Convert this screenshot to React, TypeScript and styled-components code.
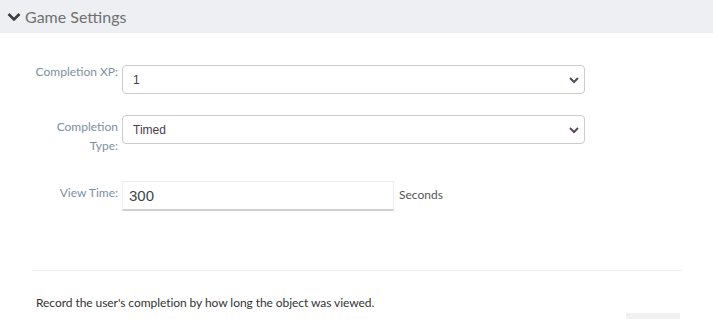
import React from "react";
import styled, { createGlobalStyle } from "styled-components";

const GlobalStyle = createGlobalStyle`
  html, body {
    margin: 0;
    padding: 0;
    background: #ffffff;
    font-family: "Lato", "Liberation Sans", sans-serif;
  }
`;

const Page = styled.div`
  width: 713px;
  height: 319px;
  overflow: hidden;
`;

const Header = styled.div`
  display: flex;
  align-items: center;
  gap: 4px;
  height: 33px;
  padding-left: 7px;
  background: #eeeff3;
  color: #6f6f6f;
  font-size: 16px;
`;

const Form = styled.div`
  display: flex;
  flex-direction: column;
  padding-top: 32px;
`;

const Row = styled.div<{ gap: number }>`
  display: flex;
  align-items: flex-start;
  margin-bottom: ${(p) => p.gap}px;
`;

const Label = styled.label<{ offset?: number }>`
  width: 122px;
  flex-shrink: 0;
  text-align: right;
  padding-right: 4px;
  margin-top: ${(p) => p.offset ?? 2}px;
  box-sizing: border-box;
  color: #7d8fa3;
  font-size: 12px;
  line-height: 19px;
`;

const SelectBox = styled.div`
  position: relative;
  width: 463px;
  height: 29px;
  box-sizing: border-box;
  border: 1px solid #cccccc;
  border-radius: 4px;
  display: flex;
  align-items: center;
  padding-left: 10px;
  color: #4a3b4e;
  font-size: 12px;
  font-family: "Liberation Sans", Arial, sans-serif;
`;

const Caret = styled.svg`
  position: absolute;
  right: 5px;
  top: 10px;
`;

const TextInput = styled.div`
  width: 272px;
  height: 30px;
  box-sizing: border-box;
  border: 1px solid #eeeeee;
  border-bottom: 2px solid #cfcfcf;
  display: flex;
  align-items: center;
  padding-left: 6px;
  color: #444444;
  font-size: 15px;
  font-family: "Liberation Sans", Arial, sans-serif;
`;

const Unit = styled.span`
  margin-left: 5px;
  padding-top: 6px;
  color: #555555;
  font-size: 12px;
`;

const Divider = styled.hr`
  margin: 0 31px 0 32px;
  border: none;
  border-top: 1px solid #eeeeee;
`;

const Note = styled.p`
  margin: 24px 0 0 36px;
  color: #333333;
  font-size: 12px;
  letter-spacing: -0.06px;
`;

const Footer = styled.div`
  display: flex;
  justify-content: flex-end;
  padding-right: 33px;
`;

const GhostButton = styled.div`
  width: 54px;
  height: 20px;
  margin-top: 3px;
  background: #f1f1f1;
`;

function Chevron() {
  return (
    <svg width="14" height="10" viewBox="0 0 14 10">
      <path d="M1.5 2 L7 7.5 L12.5 2" fill="none" stroke="#3d3d3d" strokeWidth="2.6" />
    </svg>
  );
}

function Select({ value }: { value: string }) {
  return (
    <SelectBox>
      {value}
      <Caret width="10" height="8" viewBox="0 0 10 8">
        <path d="M1 2 L5 6 L9 2" fill="none" stroke="#5a4a5e" strokeWidth="2" />
      </Caret>
    </SelectBox>
  );
}

export default function App() {
  return (
    <Page>
      <GlobalStyle />
      <Header>
        <Chevron />
        Game Settings
      </Header>
      <Form>
        <Row gap={21}>
          <Label offset={-3}>Completion XP:</Label>
          <Select value="1" />
        </Row>
        <Row gap={26}>
          <Label>
            Completion
            <br />
            Type:
          </Label>
          <Select value="Timed" />
        </Row>
        <Row gap={59}>
          <Label>View Time:</Label>
          <TextInput>300</TextInput>
          <Unit>Seconds</Unit>
        </Row>
      </Form>
      <Divider />
      <Note>Record the user's completion by how long the object was viewed.</Note>
      <Footer>
        <GhostButton />
      </Footer>
    </Page>
  );
}
